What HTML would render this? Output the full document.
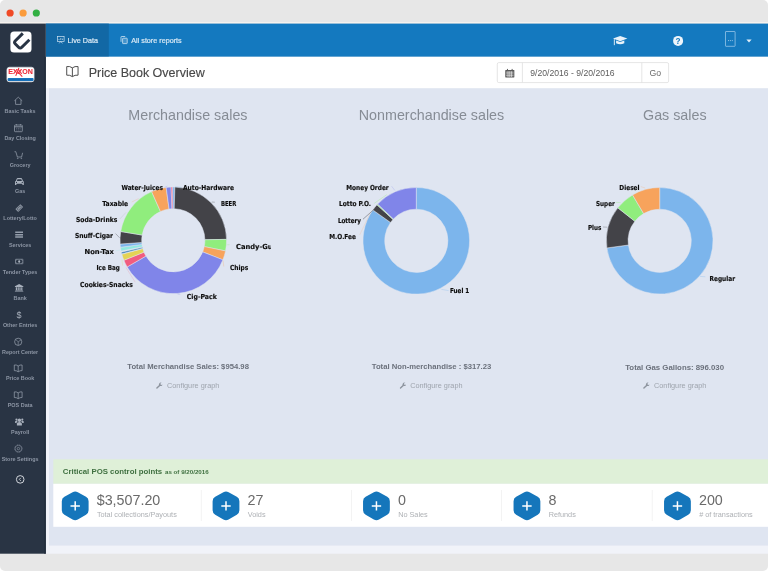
<!DOCTYPE html>
<html lang="en"><head><meta charset="utf-8"><title>Price Book Overview</title>
<style>
html,body{margin:0;padding:0;background:#fff;}
body{width:768px;height:571px;overflow:hidden;position:relative;font-family:"Liberation Sans",Arial,sans-serif;}
#frame{position:absolute;left:0;top:0;width:768px;height:571px;background:#e7e7e7;border-radius:5px;overflow:hidden;will-change:transform;filter:blur(0.4px);}
#frame div,#frame svg{position:absolute;}
.tt{color:#d9e9f5;-webkit-text-stroke:0.2px #d9e9f5;font-size:7.2px;line-height:10px;top:35.5px;white-space:nowrap;}
#title{left:88.7px;top:64.9px;font-size:12.5px;line-height:16px;color:#484848;-webkit-text-stroke:0.15px #484848;white-space:nowrap;}
.h{font-size:14.3px;line-height:18px;top:106.2px;color:#868c95;white-space:nowrap;transform:translateX(-50%);}
.tot{font-size:7.7px;font-weight:bold;line-height:10px;top:362.3px;color:#6b717c;white-space:nowrap;transform:translateX(-50%);}
.cfg{font-size:7.3px;line-height:10px;top:380.7px;color:#9ea4ad;white-space:nowrap;}
.lb{font-family:"DejaVu Sans Condensed","DejaVu Sans","Liberation Sans",sans-serif;font-weight:bold;font-size:6.9px;fill:#0c0c0c;stroke:#0c0c0c;stroke-width:0.14px;}
.sl{left:-9.9px;width:60px;text-align:center;font-size:5.45px;font-weight:bold;line-height:8px;color:#8c95a4;white-space:nowrap;}
.cv{top:491.2px;font-size:14.3px;line-height:18px;color:#6a6a6a;white-space:nowrap;}
.cl{top:509.8px;font-size:7.3px;line-height:10px;color:#aeb1b5;white-space:nowrap;}
</style></head>
<body>
<div id="frame">
<svg id="art" style="left:0;top:0" width="768" height="571" viewBox="0 0 768 571">
<!-- window chrome -->
<circle cx="10.1" cy="13" r="3.6" fill="#f04a26"/>
<circle cx="23.1" cy="13" r="3.6" fill="#fb9c3c"/>
<circle cx="36.3" cy="13" r="3.6" fill="#32b043"/>
<rect x="0" y="22" width="768" height="1.6" fill="#f6f2ee"/>
<!-- page backgrounds -->
<rect x="45.8" y="88" width="723" height="465.7" fill="#f1f3f9"/>
<rect x="49" y="88" width="720" height="457.6" fill="#dfe5f1"/>
<rect x="45.8" y="23.6" width="723" height="33.2" fill="#1479bf"/>
<rect x="45.8" y="23.6" width="63" height="33.2" fill="#1268a5"/>
<rect x="45.8" y="56.8" width="723" height="31.4" fill="#fff"/>
<rect x="0" y="23.6" width="45.8" height="530.1" fill="#293444"/>
<rect x="44.2" y="56.8" width="1.6" height="496.9" fill="#242e3d"/>
<rect x="53.3" y="459.3" width="720" height="24.5" fill="#dff0d8"/>
<rect x="53.3" y="483.8" width="720" height="43" fill="#fff"/>
<!-- logos -->
<g transform="translate(10.4 31.6)"><rect width="21.1" height="21" rx="3.6" fill="#fff"/><path d="M12.4 1.8L5 9.2Q3.4 10.8 5 12.4L8.2 15.6Q9.8 17.2 11.4 15.6L19 8.2" fill="none" stroke="#293444" stroke-width="3" stroke-linejoin="round"/></g>
<g transform="translate(6.6 66.9)"><rect x="0.3" y="0.3" width="27.2" height="14.6" rx="2.6" fill="#fff" stroke="#dfe3ea" stroke-width="0.6"/><rect x="1" y="11.2" width="26" height="2.9" rx="1" fill="#1a74bd"/><path d="M3 12.7H25.4" stroke="#0c58a0" stroke-width="0.6" stroke-dasharray="0.7 0.5" fill="none"/><path d="M12.3 1.1L9.1 9M11 4.8L15.7 9.7" stroke="#ee2c3a" stroke-width="1.1" fill="none"/><text x="13.95" y="7.2" text-anchor="middle" textLength="24.7" lengthAdjust="spacingAndGlyphs" font-family="Liberation Sans, sans-serif" font-weight="bold" font-size="7.4" fill="#ee2c3a" stroke="#ee2c3a" stroke-width="0.12">EXXON</text></g>
<g fill="none" stroke="#949dab" stroke-width="0.75">
<g transform="translate(18.3 100.9)"><path d="M-3.9 -0.1L0 -3.7L3.9 -0.1M-2.7 -1V3.5H2.7V-1"/></g>
<g transform="translate(18.4 128.0)"><rect x="-3.9" y="-3" width="7.8" height="6.7" rx="0.7"/><path d="M-3.9 -1.2H3.9" stroke-width="0.9"/><path d="M-2 -4V-2.6M2 -4V-2.6"/><path d="M-2.2 0.4H-1.2M-0.5 0.4H0.5M1.2 0.4H2.2M-2.2 2H-1.2M-0.5 2H0.5M1.2 2H2.2" stroke-width="0.7" opacity="0.7"/></g>
<g transform="translate(18.6 155.1)"><path d="M-4.1 -3.4H-2.8L-1.2 1.9H3L4 -2.3"/><circle cx="-0.8" cy="3.2" r="0.35"/><circle cx="2.7" cy="3.2" r="0.35"/></g>
<g transform="translate(19.4 181.5)"><path d="M-4.4 3.4V0.6Q-4.4 -0.3 -3.6 -0.5L-2.8 -2.6Q-2.5 -3.4 -1.6 -3.4H1.6Q2.5 -3.4 2.8 -2.6L3.6 -0.5Q4.4 -0.3 4.4 0.6V3.4H3V2.3H-3V3.4ZM-2.5 -0.6H2.5L1.9 -2.3H-1.9Z" fill-rule="evenodd" fill="#a9b1bd" stroke="none"/><circle cx="-2.9" cy="0.9" r="0.6" fill="#293444" stroke="none"/><circle cx="2.9" cy="0.9" r="0.6" fill="#293444" stroke="none"/></g>
<g transform="translate(19.3 208.1)"><g transform="rotate(-45) scale(0.84)"><rect x="-4.2" y="-2.4" width="8.4" height="4.8" rx="0.5" fill="#a9b1bd" fill-opacity="0.75" stroke="none"/><rect x="-2.6" y="-1.2" width="5.2" height="2.4" fill="none" stroke="#293444" stroke-width="0.5"/></g></g>
<g transform="translate(19.1 234.7)"><path d="M-3.9 -2.4H3.9M-3.9 0H3.9M-3.9 2.4H3.9" stroke-width="1.5"/></g>
<g transform="translate(19.2 261.5)"><g transform="scale(0.9)"><rect x="-4.1" y="-2.5" width="8.2" height="5" rx="0.3" stroke-width="0.8"/><ellipse cx="0" cy="0" rx="1.1" ry="1.5" fill="#a9b1bd" stroke="none"/><path d="M-4.1 -0.9Q-2.6 -0.9 -2.6 -2.5M4.1 -0.9Q2.6 -0.9 2.6 -2.5M-4.1 0.9Q-2.6 0.9 -2.6 2.5M4.1 0.9Q2.6 0.9 2.6 2.5" stroke-width="0.5"/></g></g>
<g transform="translate(19.1 288.0)"><g fill="#a9b1bd" stroke="none"><path d="M-4.2 -1.7L0 -4L4.2 -1.7V-1.1H-4.2Z"/><path d="M-3.3 -0.7H-2.1V2.2H-3.3ZM-1.5 -0.7H-0.3V2.2H-1.5ZM0.3 -0.7H1.5V2.2H0.3ZM2.1 -0.7H3.3V2.2H2.1Z"/><path d="M-3.8 2.5H3.8V3.1H-3.8ZM-4.2 3.4H4.2V4H-4.2Z"/></g></g>
<g transform="translate(19.1 315.2)"><text x="0" y="2.9" font-size="9" text-anchor="middle" fill="#a9b1bd" stroke="none" font-family="Liberation Sans, sans-serif">$</text></g>
<g transform="translate(18.2 341.8)"><circle cx="0" cy="0" r="3.6"/><path d="M0 0V3.6M0 0L-2.6 -2.4M0 0L2.9 -2" stroke-width="0.6"/></g>
<g transform="translate(18.2 368.2)"><path d="M0 -2.2V3.6M0 -2.2Q-1.8 -3.6 -3.9 -3.2V2.4Q-1.8 2.2 0 3.6Q1.8 2.2 3.9 2.4V-3.2Q1.8 -3.6 0 -2.2"/></g>
<g transform="translate(18.2 395.1)"><path d="M0 -2.2V3.6M0 -2.2Q-1.8 -3.6 -3.9 -3.2V2.4Q-1.8 2.2 0 3.6Q1.8 2.2 3.9 2.4V-3.2Q1.8 -3.6 0 -2.2"/></g>
<g transform="translate(19.4 421.8)"><g fill="#a9b1bd" stroke="none"><circle cx="0" cy="-1.6" r="1.7"/><circle cx="-2.9" cy="-2.2" r="1.1"/><circle cx="2.9" cy="-2.2" r="1.1"/><path d="M-2.5 3.7V1.8Q-2.5 0.2 0 0.2Q2.5 0.2 2.5 1.8V3.7Z"/><path d="M-4.3 1.2V-0.2Q-4.3 -1 -2.9 -1Q-1.9 -1 -1.8 -0.4Q-2.9 0.2 -2.9 1.2ZM4.3 1.2V-0.2Q4.3 -1 2.9 -1Q1.9 -1 1.8 -0.4Q2.9 0.2 2.9 1.2Z"/></g></g>
<g transform="translate(18.4 448.6)"><circle cx="0" cy="0" r="3.3" stroke-width="0.6" opacity="0.8"/><circle cx="0" cy="0" r="3.7" stroke-dasharray="1 0.94" stroke-width="1" opacity="0.6"/><circle cx="0" cy="0" r="1.2" stroke-width="0.6"/></g>
<g transform="translate(20.2 479.4)"><circle cx="0" cy="0" r="3.8" stroke="#d3d7dd" stroke-width="1"/><path d="M0.6 -1.5L-0.9 0L0.6 1.5" stroke="#d3d7dd" stroke-width="0.9"/></g>
</g>
<!-- header icons -->
<g transform="translate(57 36)" fill="none" stroke="#cfe3f2" stroke-width="0.7"><rect x="0.5" y="0.6" width="6.6" height="4.8"/><path d="M2.2 7.4L3.8 5.4L5.4 7.4M2 4V3M3.8 4V2M5.6 4V2.6"/></g>
<g transform="translate(120.2 36)" fill="none" stroke="#cfe3f2" stroke-width="0.8"><rect x="2.4" y="2.2" width="4.6" height="5.4" rx="0.5" fill="#cfe3f2" fill-opacity="0.25"/><path d="M0.8 5.8V1Q0.8 0.5 1.3 0.5H5"/></g>
<g transform="translate(612.6 34.9) scale(1.027)"><path d="M0.4 3.6L7.4 1L14.4 3.6L7.4 6.2Z" fill="#e8f2fa"/><path d="M3.4 5.4V8.2Q7.4 10.2 11.4 8.2V5.4L7.4 7Z" fill="#e8f2fa"/><path d="M1.7 4.2V10" stroke="#e8f2fa" stroke-width="0.9"/></g>
<g transform="translate(672.6 35.4)"><circle cx="5.5" cy="5.5" r="5" fill="#eef5fb"/><text x="5.5" y="8.4" text-anchor="middle" font-family="Liberation Sans, sans-serif" font-weight="bold" font-size="8.2" fill="#1479bf">?</text></g>
<g transform="translate(724.8 30.6)" fill="none" stroke="#9fcaeb" stroke-width="0.75"><rect x="0.7" y="0.9" width="9.6" height="14.8" rx="0.4"/><path d="M3.2 10H4.2M5.1 10H6.1M7 10H8" stroke-width="0.9"/></g>
<g transform="translate(746 39)"><path d="M0.4 0.5H5.6L3 3.4Z" fill="#e0edf7"/></g>
<!-- title icon -->
<g transform="translate(65.9 64.7) scale(1.03 1.046)" fill="none" stroke="#4c4c4c" stroke-width="0.95"><path d="M6.3 3V11.4M6.3 3Q3.8 1.2 0.8 1.8V10Q3.8 9.6 6.3 11.4Q8.8 9.6 11.8 10V1.8Q8.8 1.2 6.3 3"/></g>
<!-- date group -->
<g fill="#fff" stroke="#dedede" stroke-width="0.8"><rect x="497.3" y="62.6" width="171.3" height="20" rx="1.5"/><path d="M522.4 62.6V82.6M641.8 62.6V82.6" fill="none"/></g>
<g transform="translate(504.8 68.6) scale(1.11)"><rect x="0.4" y="1.2" width="8.2" height="6.8" fill="#5a5a5a" rx="0.4"/><path d="M1.1 3.2H7.9M1.1 4.8H7.9M1.1 6.4H7.9M2.9 2.4V7.6M4.5 2.4V7.6M6.1 2.4V7.6" stroke="#fff" stroke-width="0.5"/><path d="M2.4 0.3V1.8M6.6 0.3V1.8" stroke="#5a5a5a" stroke-width="0.9"/></g>
<!-- charts -->
<clipPath id="cc1"><rect x="75" y="170" width="196" height="140"/></clipPath><g clip-path="url(#cc1)">
<path d="M172.56 187.01A53.3 53.3 0 0 1 174.88 187.02L174.24 208.71A31.6 31.6 0 0 0 172.86 208.70Z" fill="#7cb5ec" stroke="#dfe5f1" stroke-width="0.5" stroke-linejoin="round"/>
<path d="M174.88 187.02A53.3 53.3 0 0 1 226.59 239.37L204.90 239.75A31.6 31.6 0 0 0 174.24 208.71Z" fill="#434348" stroke="#dfe5f1" stroke-width="0.5" stroke-linejoin="round"/>
<path d="M226.59 239.37A53.3 53.3 0 0 1 225.53 250.93L204.27 246.60A31.6 31.6 0 0 0 204.90 239.75Z" fill="#90ed7d" stroke="#dfe5f1" stroke-width="0.5" stroke-linejoin="round"/>
<path d="M225.53 250.93A53.3 53.3 0 0 1 222.89 259.83L202.70 251.88A31.6 31.6 0 0 0 204.27 246.60Z" fill="#f7a35c" stroke="#dfe5f1" stroke-width="0.5" stroke-linejoin="round"/>
<path d="M222.89 259.83A53.3 53.3 0 0 1 127.14 266.95L145.93 256.10A31.6 31.6 0 0 0 202.70 251.88Z" fill="#8085e9" stroke="#dfe5f1" stroke-width="0.5" stroke-linejoin="round"/>
<path d="M127.14 266.95A53.3 53.3 0 0 1 123.88 260.27L144.00 252.14A31.6 31.6 0 0 0 145.93 256.10Z" fill="#f15c80" stroke="#dfe5f1" stroke-width="0.5" stroke-linejoin="round"/>
<path d="M123.88 260.27A53.3 53.3 0 0 1 121.89 254.36L142.82 248.64A31.6 31.6 0 0 0 144.00 252.14Z" fill="#e4d354" stroke="#dfe5f1" stroke-width="0.5" stroke-linejoin="round"/>
<path d="M121.74 253.83A53.3 53.3 0 0 1 121.35 252.20L142.50 247.35A31.6 31.6 0 0 0 142.73 248.32Z" fill="#3a7fb4" stroke="#dfe5f1" stroke-width="0.5" stroke-linejoin="round"/>
<path d="M121.11 251.11A53.3 53.3 0 0 1 120.46 247.26L141.97 244.42A31.6 31.6 0 0 0 142.36 246.71Z" fill="#91e8e1" stroke="#dfe5f1" stroke-width="0.5" stroke-linejoin="round"/>
<path d="M120.46 247.26A53.3 53.3 0 0 1 120.13 244.02L141.78 242.50A31.6 31.6 0 0 0 141.97 244.42Z" fill="#7cb5ec" stroke="#dfe5f1" stroke-width="0.5" stroke-linejoin="round"/>
<path d="M120.13 244.02A53.3 53.3 0 0 1 120.73 231.50L142.13 235.08A31.6 31.6 0 0 0 141.78 242.50Z" fill="#434348" stroke="#dfe5f1" stroke-width="0.5" stroke-linejoin="round"/>
<path d="M120.73 231.50A53.3 53.3 0 0 1 151.62 191.61L160.45 211.43A31.6 31.6 0 0 0 142.13 235.08Z" fill="#90ed7d" stroke="#dfe5f1" stroke-width="0.5" stroke-linejoin="round"/>
<path d="M151.62 191.61A53.3 53.3 0 0 1 166.16 187.48L169.07 208.98A31.6 31.6 0 0 0 160.45 211.43Z" fill="#f7a35c" stroke="#dfe5f1" stroke-width="0.5" stroke-linejoin="round"/>
<path d="M166.16 187.48A53.3 53.3 0 0 1 171.07 187.05L171.98 208.73A31.6 31.6 0 0 0 169.07 208.98Z" fill="#8085e9" stroke="#dfe5f1" stroke-width="0.5" stroke-linejoin="round"/>
<path d="M171.07 187.05A53.3 53.3 0 0 1 172.56 187.01L172.86 208.70A31.6 31.6 0 0 0 171.98 208.73Z" fill="#f15c80" stroke="#dfe5f1" stroke-width="0.5" stroke-linejoin="round"/>
<path d="M164.6 187.4L167.4 186" fill="none" stroke="#8085e9" stroke-width="0.6" opacity="0.4"/>
<text x="121.4" y="189.90" textLength="41.6" lengthAdjust="spacingAndGlyphs" class="lb">Water-Juices</text>
<path d="M181.6 187.4L175 186.4" fill="none" stroke="#7cb5ec" stroke-width="0.6" opacity="0.4"/>
<text x="183" y="189.90" textLength="51.0" lengthAdjust="spacingAndGlyphs" class="lb">Auto-Hardware</text>
<path d="M214.8 202.2L211.8 202" fill="none" stroke="#434348" stroke-width="0.6" opacity="0.55"/>
<text x="221" y="206.10" textLength="15.3" lengthAdjust="spacingAndGlyphs" class="lb">BEER</text>
<path d="M229.6 244.7L227.2 244.8" fill="none" stroke="#90ed7d" stroke-width="0.6" opacity="0.5"/>
<text x="236" y="248.70" textLength="43.5" lengthAdjust="spacingAndGlyphs" class="lb">Candy-Gum</text>
<path d="M223.8 266.5L223 260.5" fill="none" stroke="#f7a35c" stroke-width="0.6" opacity="0.45"/>
<text x="230" y="270.30" textLength="18.3" lengthAdjust="spacingAndGlyphs" class="lb">Chips</text>
<path d="M180.2 294.2L177.6 294" fill="none" stroke="#8085e9" stroke-width="0.6" opacity="0.5"/>
<text x="186.8" y="298.50" textLength="30.0" lengthAdjust="spacingAndGlyphs" class="lb">Cig-Pack</text>
<path d="M135.2 282.2L126 267.5" fill="none" stroke="#f15c80" stroke-width="0.6" opacity="0.3"/>
<text x="80.1" y="286.50" textLength="52.8" lengthAdjust="spacingAndGlyphs" class="lb">Cookies-Snacks</text>
<path d="M122.6 265.6L122 259.5" fill="none" stroke="#e4d354" stroke-width="0.6" opacity="0.4"/>
<text x="96.5" y="270.30" textLength="23.3" lengthAdjust="spacingAndGlyphs" class="lb">Ice Bag</text>
<path d="M115.5 251L120 250" fill="none" stroke="#91e8e1" stroke-width="0.6" opacity="0.3"/>
<text x="84.5" y="254.20" textLength="29.3" lengthAdjust="spacingAndGlyphs" class="lb">Non-Tax</text>
<path d="M115.6 233.6L119.6 237.8" fill="none" stroke="#434348" stroke-width="0.6" opacity="0.6"/>
<text x="75" y="238.10" textLength="38.0" lengthAdjust="spacingAndGlyphs" class="lb">Snuff-Cigar</text>
<path d="M119.8 219L126 212.4" fill="none" stroke="#434348" stroke-width="0.6" opacity="0.15"/>
<text x="76" y="222.20" textLength="41.3" lengthAdjust="spacingAndGlyphs" class="lb">Soda-Drinks</text>
<path d="M131.8 202L138.6 198.6" fill="none" stroke="#f7a35c" stroke-width="0.6" opacity="0.4"/>
<text x="102.3" y="206.10" textLength="25.9" lengthAdjust="spacingAndGlyphs" class="lb">Taxable</text>
</g><clipPath id="cc2"><rect x="318" y="170" width="196" height="140"/></clipPath><g clip-path="url(#cc2)">
<path d="M416.30 187.50A53.3 53.3 0 1 1 372.85 209.92L390.54 222.49A31.6 31.6 0 1 0 416.30 209.20Z" fill="#7cb5ec" stroke="#dfe5f1" stroke-width="0.5" stroke-linejoin="round"/>
<path d="M372.85 209.92A53.3 53.3 0 0 1 377.00 204.79L393.00 219.45A31.6 31.6 0 0 0 390.54 222.49Z" fill="#434348" stroke="#dfe5f1" stroke-width="0.5" stroke-linejoin="round"/>
<path d="M377.00 204.79A53.3 53.3 0 0 1 377.64 204.11L393.38 219.05A31.6 31.6 0 0 0 393.00 219.45Z" fill="#90ed7d" stroke="#dfe5f1" stroke-width="0.5" stroke-linejoin="round"/>
<path d="M377.64 204.11A53.3 53.3 0 0 1 416.30 187.50L416.30 209.20A31.6 31.6 0 0 0 393.38 219.05Z" fill="#8085e9" stroke="#dfe5f1" stroke-width="0.5" stroke-linejoin="round"/>
<path d="M391.6 186.2L394.8 190.4" fill="none" stroke="#8085e9" stroke-width="0.6" opacity="0.4"/>
<text x="346.3" y="190.40" textLength="42.4" lengthAdjust="spacingAndGlyphs" class="lb">Money Order</text>
<path d="M374.2 203.4L386.8 194.6" fill="none" stroke="#90ed7d" stroke-width="0.6" opacity="0.5"/>
<text x="339.1" y="206.30" textLength="31.9" lengthAdjust="spacingAndGlyphs" class="lb">Lotto P.O.</text>
<path d="M363 219.2L373.8 209.6" fill="none" stroke="#434348" stroke-width="0.6" opacity="0.75"/>
<text x="337.9" y="222.70" textLength="23.1" lengthAdjust="spacingAndGlyphs" class="lb">Lottery</text>
<path d="M359.6 235L370 213.6" fill="none" stroke="#f7a35c" stroke-width="0.6" opacity="0.3"/>
<text x="329.3" y="238.50" textLength="26.7" lengthAdjust="spacingAndGlyphs" class="lb">M.O.Fee</text>
<path d="M448.6 290.6L441.4 289.4" fill="none" stroke="#7cb5ec" stroke-width="0.6" opacity="0.5"/>
<text x="450" y="293.40" textLength="19.2" lengthAdjust="spacingAndGlyphs" class="lb">Fuel 1</text>
</g><clipPath id="cc3"><rect x="562" y="170" width="206" height="140"/></clipPath><g clip-path="url(#cc3)">
<path d="M659.70 187.50A53.3 53.3 0 1 1 606.88 247.94L628.38 245.03A31.6 31.6 0 1 0 659.70 209.20Z" fill="#7cb5ec" stroke="#dfe5f1" stroke-width="0.5" stroke-linejoin="round"/>
<path d="M606.88 247.94A53.3 53.3 0 0 1 617.81 207.84L634.87 221.26A31.6 31.6 0 0 0 628.38 245.03Z" fill="#434348" stroke="#dfe5f1" stroke-width="0.5" stroke-linejoin="round"/>
<path d="M617.81 207.84A53.3 53.3 0 0 1 632.57 194.92L643.61 213.60A31.6 31.6 0 0 0 634.87 221.26Z" fill="#90ed7d" stroke="#dfe5f1" stroke-width="0.5" stroke-linejoin="round"/>
<path d="M632.57 194.92A53.3 53.3 0 0 1 659.70 187.50L659.70 209.20A31.6 31.6 0 0 0 643.61 213.60Z" fill="#f7a35c" stroke="#dfe5f1" stroke-width="0.5" stroke-linejoin="round"/>
<path d="M640.8 186.6L645.2 188" fill="none" stroke="#f7a35c" stroke-width="0.6" opacity="0.4"/>
<text x="619.3" y="190.40" textLength="20.3" lengthAdjust="spacingAndGlyphs" class="lb">Diesel</text>
<path d="M615.6 202.4L620.6 202.6" fill="none" stroke="#90ed7d" stroke-width="0.6" opacity="0.5"/>
<text x="596" y="206.30" textLength="18.8" lengthAdjust="spacingAndGlyphs" class="lb">Super</text>
<path d="M603 227L607.2 227.2" fill="none" stroke="#434348" stroke-width="0.6" opacity="0.5"/>
<text x="587.9" y="230.40" textLength="13.4" lengthAdjust="spacingAndGlyphs" class="lb">Plus</text>
<path d="M705.4 276.8L700 276.4" fill="none" stroke="#7cb5ec" stroke-width="0.6" opacity="0.5"/>
<text x="709.5" y="280.90" textLength="25.5" lengthAdjust="spacingAndGlyphs" class="lb">Regular</text>
</g>
<g transform="translate(156 382)"><path d="M0.9 6.1L3.6 3.4" stroke="#8d949e" stroke-width="1.4" stroke-linecap="round" fill="none"/><path d="M5.9 1.1A1.7 1.7 0 1 0 6.4 2.4L5.3 2.9L4.4 2.2L4.8 1.1Z" fill="#8d949e"/></g><g transform="translate(399.6 382)"><path d="M0.9 6.1L3.6 3.4" stroke="#8d949e" stroke-width="1.4" stroke-linecap="round" fill="none"/><path d="M5.9 1.1A1.7 1.7 0 1 0 6.4 2.4L5.3 2.9L4.4 2.2L4.8 1.1Z" fill="#8d949e"/></g><g transform="translate(643 382)"><path d="M0.9 6.1L3.6 3.4" stroke="#8d949e" stroke-width="1.4" stroke-linecap="round" fill="none"/><path d="M5.9 1.1A1.7 1.7 0 1 0 6.4 2.4L5.3 2.9L4.4 2.2L4.8 1.1Z" fill="#8d949e"/></g>
<!-- cards -->
<path d="M72.59 492.17Q75.20 490.70 77.81 492.17L85.99 496.78Q88.60 498.25 88.60 501.25L88.60 510.35Q88.60 513.35 85.99 514.82L77.81 519.43Q75.20 520.90 72.59 519.43L64.41 514.82Q61.80 513.35 61.80 510.35L61.80 501.25Q61.80 498.25 64.41 496.78Z" fill="#1576bb"/><path d="M70.50 505.9H79.90M75.20 501.2V510.6" stroke="#fff" stroke-width="1.5" fill="none"/>
<path d="M223.39 492.17Q226.00 490.70 228.61 492.17L236.79 496.78Q239.40 498.25 239.40 501.25L239.40 510.35Q239.40 513.35 236.79 514.82L228.61 519.43Q226.00 520.90 223.39 519.43L215.21 514.82Q212.60 513.35 212.60 510.35L212.60 501.25Q212.60 498.25 215.21 496.78Z" fill="#1576bb"/><path d="M221.30 505.9H230.70M226.00 501.2V510.6" stroke="#fff" stroke-width="1.5" fill="none"/>
<path d="M373.84 492.17Q376.45 490.70 379.06 492.17L387.24 496.78Q389.85 498.25 389.85 501.25L389.85 510.35Q389.85 513.35 387.24 514.82L379.06 519.43Q376.45 520.90 373.84 519.43L365.66 514.82Q363.05 513.35 363.05 510.35L363.05 501.25Q363.05 498.25 365.66 496.78Z" fill="#1576bb"/><path d="M371.75 505.9H381.15M376.45 501.2V510.6" stroke="#fff" stroke-width="1.5" fill="none"/>
<path d="M524.34 492.17Q526.95 490.70 529.56 492.17L537.74 496.78Q540.35 498.25 540.35 501.25L540.35 510.35Q540.35 513.35 537.74 514.82L529.56 519.43Q526.95 520.90 524.34 519.43L516.16 514.82Q513.55 513.35 513.55 510.35L513.55 501.25Q513.55 498.25 516.16 496.78Z" fill="#1576bb"/><path d="M522.25 505.9H531.65M526.95 501.2V510.6" stroke="#fff" stroke-width="1.5" fill="none"/>
<path d="M674.84 492.17Q677.45 490.70 680.06 492.17L688.24 496.78Q690.85 498.25 690.85 501.25L690.85 510.35Q690.85 513.35 688.24 514.82L680.06 519.43Q677.45 520.90 674.84 519.43L666.66 514.82Q664.05 513.35 664.05 510.35L664.05 501.25Q664.05 498.25 666.66 496.78Z" fill="#1576bb"/><path d="M672.75 505.9H682.15M677.45 501.2V510.6" stroke="#fff" stroke-width="1.5" fill="none"/>
<rect x="200.85" y="490" width="0.8" height="31" fill="#f0f0f0"/>
<rect x="351.00" y="490" width="0.8" height="31" fill="#f0f0f0"/>
<rect x="501.20" y="490" width="0.8" height="31" fill="#f0f0f0"/>
<rect x="651.80" y="490" width="0.8" height="31" fill="#f0f0f0"/>
</svg>
<div class="sl" style="top:107.20px">Basic Tasks</div>
<div class="sl" style="top:133.95px">Day Closing</div>
<div class="sl" style="top:160.70px">Grocery</div>
<div class="sl" style="top:187.45px">Gas</div>
<div class="sl" style="top:214.20px">Lottery/Lotto</div>
<div class="sl" style="top:240.95px">Services</div>
<div class="sl" style="top:267.70px">Tender Types</div>
<div class="sl" style="top:294.45px">Bank</div>
<div class="sl" style="top:321.20px">Other Entries</div>
<div class="sl" style="top:347.95px">Report Center</div>
<div class="sl" style="top:373.90px">Price Book</div>
<div class="sl" style="top:401.45px">POS Data</div>
<div class="sl" style="top:428.20px">Payroll</div>
<div class="sl" style="top:454.95px">Store Settings</div>
<div class="tt" style="left:67.6px">Live Data</div>
<div class="tt" style="left:131.3px">All store reports</div>
<div id="title">Price Book Overview</div>
<div style="left:530.3px;top:68.3px;font-size:8.62px;line-height:11px;color:#5c5c5c;white-space:nowrap">9/20/2016 - 9/20/2016</div>
<div style="left:649.6px;top:68.3px;font-size:8.7px;line-height:11px;color:#6a6a6a;white-space:nowrap">Go</div>
<div class="h" style="left:187.9px">Merchandise sales</div>
<div class="h" style="left:431.5px">Nonmerchandise sales</div>
<div class="h" style="left:674.8px">Gas sales</div>
<div class="tot" style="left:188.1px">Total Merchandise Sales: $954.98</div>
<div class="tot" style="left:431.5px">Total Non-merchandise : $317.23</div>
<div class="tot" style="left:674.6px;font-size:7.82px;top:363.2px">Total Gas Gallons: 896.030</div>
<div class="cfg" style="left:167px">Configure graph</div>
<div class="cfg" style="left:410.2px">Configure graph</div>
<div class="cfg" style="left:654px">Configure graph</div>
<div style="left:62.8px;top:466.7px;font-size:7.82px;font-weight:bold;line-height:10px;color:#3f7040;white-space:nowrap">Critical POS control points <span style="font-size:6.2px;position:relative;left:0.6px">as of 9/20/2016</span></div>
<div class="cv" style="left:96.70px">$3,507.20</div>
<div class="cl" style="left:96.90px">Total collections/Payouts</div>
<div class="cv" style="left:247.50px">27</div>
<div class="cl" style="left:247.70px">Voids</div>
<div class="cv" style="left:397.95px">0</div>
<div class="cl" style="left:398.15px">No Sales</div>
<div class="cv" style="left:548.45px">8</div>
<div class="cl" style="left:548.65px">Refunds</div>
<div class="cv" style="left:698.95px">200</div>
<div class="cl" style="left:699.15px"># of transactions</div>
</div>
</body></html>
